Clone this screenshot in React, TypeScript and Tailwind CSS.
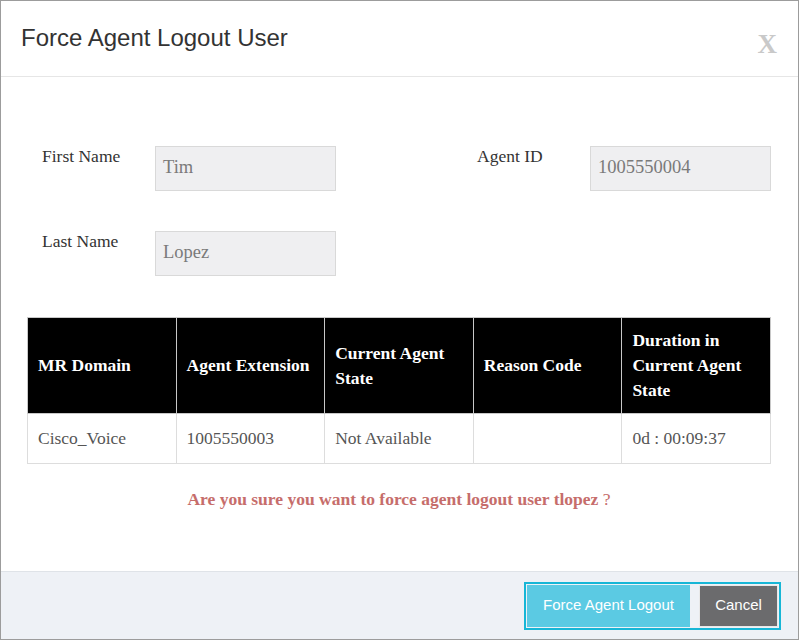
import React from 'react';

const serif = { fontFamily: '"Liberation Serif", "Times New Roman", serif' };
const sans = { fontFamily: '"Liberation Sans", Arial, sans-serif' };

const headers = ['MR Domain', 'Agent Extension', 'Current Agent State', 'Reason Code', 'Duration in Current Agent State'];
const row = ['Cisco_Voice', '1005550003', 'Not Available', '', '0d : 00:09:37'];

function Field({ label, value }: { label: string; value: string }) {
  return (
    <div className="flex items-start">
      <label className="-mt-px w-[113px] text-[17.5px] leading-[22px] text-[#333]">{label}</label>
      <div className="flex h-[45px] w-[181px] items-center border border-[#d9d9d9] bg-[#efeff1] px-[7px] pb-[2px] text-[18.5px] text-[#7a7a7a]">
        {value}
      </div>
    </div>
  );
}

export default function App() {
  return (
    <div className="flex h-[640px] w-[799px] flex-col border border-[#9c9c9c] bg-white" style={serif}>
      <div className="flex h-[76px] shrink-0 items-center justify-between border-b border-[#e6e6e6] pl-[20px] pr-[21px]">
        <h4 className="-mt-[2px] text-[24px] text-[#333]" style={sans}>
          Force Agent Logout User
        </h4>
        <span className="pt-[12px] text-[27px] font-bold leading-none text-[#c9c9c9]">X</span>
      </div>

      <div className="flex-1 pl-[26px] pr-[27px] pt-[69px]">
        <div className="grid grid-cols-[435px_1fr] gap-y-[40px] pl-[15px]">
          <Field label="First Name" value="Tim" />
          <Field label="Agent ID" value="1005550004" />
          <Field label="Last Name" value="Lopez" />
        </div>

        <table className="mt-[41px] w-[744px] table-fixed border-collapse text-[17.5px]">
          <thead>
            <tr className="bg-black">
              {headers.map((h) => (
                <th
                  key={h}
                  className="h-[95px] border border-[#c8c8c8] px-[10px] py-[10px] text-left align-middle font-bold leading-[25px] text-white"
                >
                  {h}
                </th>
              ))}
            </tr>
          </thead>
          <tbody>
            <tr>
              {row.map((c, i) => (
                <td key={i} className="h-[50px] border border-[#dddddd] px-[10px] align-middle leading-[25px] text-[#555]">
                  {c}
                </td>
              ))}
            </tr>
          </tbody>
        </table>

        <p className="mt-[23px] text-center text-[17.5px] font-bold leading-[25px] text-[#c66d6b]">
          Are you sure you want to force agent logout user tlopez <span className="font-normal">?</span>
        </p>
      </div>

      <div className="flex h-[68px] shrink-0 items-center justify-end border-t border-[#dfe3e8] bg-[#eef1f6] pr-[17px]">
        <div className="flex gap-[9px] border-2 border-[#17b6d6] p-px" style={sans}>
          <button className="h-[42px] w-[163px] bg-[#5bcae3] text-[15px] text-white">Force Agent Logout</button>
          <button className="h-[42px] w-[79px] border border-[#e8e8e8] bg-[#6b6b6d] text-[15px] text-white">Cancel</button>
        </div>
      </div>
    </div>
  );
}
